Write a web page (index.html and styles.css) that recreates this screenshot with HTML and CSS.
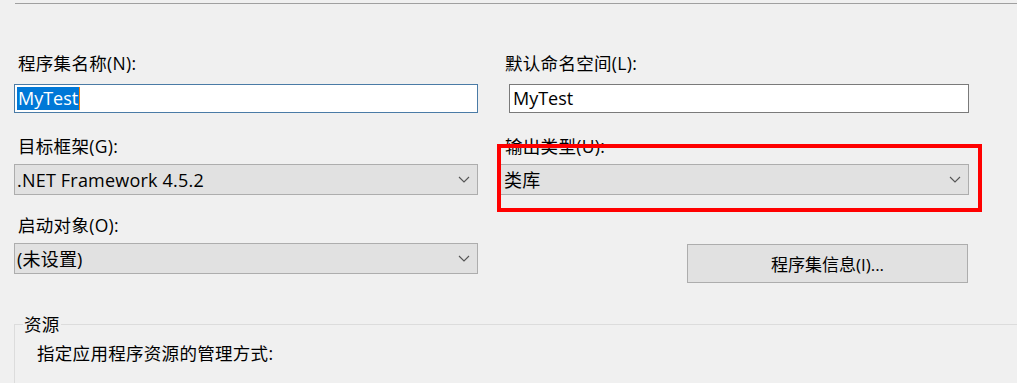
FILE: index.html
```html
<!DOCTYPE html>
<html lang="zh-CN">
<head>
<meta charset="utf-8">
<title>应用程序</title>
<link rel="stylesheet" href="styles.css">
</head>
<body>
<div class="page">
  <div class="topline"></div>
  <div class="form">
    <div class="col col-left">
      <div class="field f1">
        <label class="lbl">程序集名称(N):</label>
        <div class="textbox focused"><span class="sel">MyTest</span><span class="caret"></span></div>
      </div>
      <div class="field f2">
        <label class="lbl">目标框架(G):</label>
        <div class="combo"><span class="val">.NET Framework 4.5.2</span><svg class="chev" width="12" height="7" viewBox="0 0 12 7"><path d="M1 1 L6 6 L11 1" fill="none" stroke="#555" stroke-width="1.1"/></svg></div>
      </div>
      <div class="field f3">
        <label class="lbl">启动对象(O):</label>
        <div class="combo"><span class="val">(未设置)</span><svg class="chev" width="12" height="7" viewBox="0 0 12 7"><path d="M1 1 L6 6 L11 1" fill="none" stroke="#555" stroke-width="1.1"/></svg></div>
      </div>
    </div>
    <div class="col col-right">
      <div class="field f1 r1">
        <label class="lbl">默认命名空间(L):</label>
        <div class="textbox"><span class="txt">MyTest</span></div>
      </div>
      <div class="field f2 r2">
        <label class="lbl">输出类型(U):</label>
        <div class="combo"><span class="val">类库</span><svg class="chev" width="12" height="7" viewBox="0 0 12 7"><path d="M1 1 L6 6 L11 1" fill="none" stroke="#555" stroke-width="1.1"/></svg></div>
        <div class="highlight"></div>
      </div>
      <div class="btnrow">
        <button class="btn">程序集信息(I)...</button>
      </div>
    </div>
  </div>
  <section class="group">
    <div class="group-head"><span class="corner"></span><span class="legend">资源</span><span class="rule"></span></div>
    <div class="group-body">
      <p class="desc">指定应用程序资源的管理方式:</p>
    </div>
  </section>
</div>
</body>
</html>
```

FILE: styles.css
```css
html, body {
  margin: 0;
  padding: 0;
  background: #f0f0f0;
}
body {
  font-family: "Open Sans", "Noto Sans CJK SC", sans-serif;
  font-size: 17.5px;
  letter-spacing: 0.3px;
  color: #000;
  overflow: hidden;
}
.page {
  width: 1017px;
  height: 383px;
}
.topline {
  margin: 3px 0 0 15px;
  border-top: 1px solid #a0a0a0;
  height: 0;
}
.form {
  display: grid;
  grid-template-columns: 464px 470px;
  column-gap: 21px;
  margin: 49px 0 0 14px;
}
.col {
  display: flex;
  flex-direction: column;
}
.field {
  display: flex;
  flex-direction: column;
  position: relative;
}
.lbl {
  display: block;
  line-height: 20px;
  height: 20px;
  padding-left: 4px;
  white-space: nowrap;
}
.f1 .lbl { margin-bottom: 11px; }
.f2 { margin-top: 23px; }
.f2 .lbl { margin-bottom: 8px; }
.f3 { margin-top: 20px; }
.f3 .lbl { margin-bottom: 8px; }

.textbox {
  box-sizing: border-box;
  height: 29px;
  background: #fff;
  border: 1px solid #7a7a7a;
  display: flex;
  align-items: center;
  padding-left: 2px;
  font-size: 18px;
  letter-spacing: 0;
}
.textbox.focused {
  border-color: #4a7ba6;
}
.sel {
  background: #0078d7;
  color: #fff;
  line-height: 23px;
  padding: 0 1px 0 1px;
}
.caret {
  width: 1px;
  height: 23px;
  background: #ff8000;
}
.txt {
  padding-left: 1px;
  line-height: 23px;
}
.combo {
  box-sizing: border-box;
  height: 31px;
  background: #e1e1e1;
  border: 1px solid #adadad;
  display: flex;
  align-items: center;
  justify-content: space-between;
  padding: 0 7px 0 2px;
  font-size: 18px;
  letter-spacing: 0.2px;
}
.val {
  line-height: 24px;
  white-space: nowrap;
}
.chev {
  display: block;
}

.col-right .lbl { padding-left: 6px; }
.r1 .textbox {
  margin-left: 10px;
  width: 460px;
}
.r2 .combo {
  margin-left: 0;
  width: 470px;
}
.r2 .val { padding-left: 2px; }
.highlight {
  position: absolute;
  left: -2px;
  top: 8px;
  width: 485px;
  height: 68px;
  box-sizing: border-box;
  border: 4px solid #ff0000;
  pointer-events: none;
}
.btnrow {
  display: flex;
  margin-top: 49px;
  padding-left: 188px;
}
.btn {
  box-sizing: border-box;
  width: 281px;
  height: 39px;
  background: #e1e1e1;
  border: 1px solid #adadad;
  font-family: "Open Sans", "Noto Sans CJK SC", sans-serif;
  font-size: 17px;
  letter-spacing: 0;
  color: #000;
  padding: 0;
  margin: 0;
}

.group {
  margin: 31px 0 0 14px;
}
.group-head {
  display: flex;
  align-items: stretch;
  height: 20px;
}
.corner {
  width: 8px;
  margin-top: 10px;
  border-top: 1px solid #dcdcdc;
  border-left: 1px solid #dcdcdc;
}
.legend {
  line-height: 20px;
  padding: 0 1px;
}
.rule {
  flex: 1;
  margin-top: 10px;
  border-top: 1px solid #dcdcdc;
}
.group-body {
  border-left: 1px solid #dcdcdc;
  height: 60px;
  padding-left: 22px;
}
.desc {
  margin: 0;
  padding-top: 9px;
  line-height: 20px;
}
```
